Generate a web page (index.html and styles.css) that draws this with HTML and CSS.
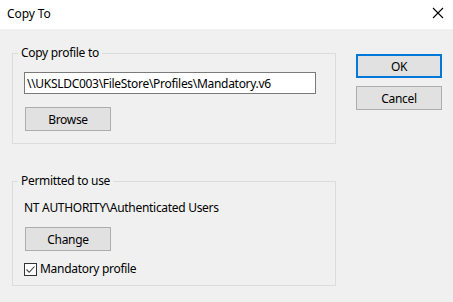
FILE: index.html
```html
<!DOCTYPE html>
<html>
<head>
<meta charset="utf-8">
<link rel="stylesheet" href="styles.css">
</head>
<body>
<div class="window">
  <div class="titlebar">
    <span class="title">Copy To</span>
    <svg class="close" width="12" height="12" viewBox="0 0 12 12"><path d="M1 1L11 11M11 1L1 11" stroke="#000" stroke-width="1.1" fill="none"/></svg>
  </div>
  <div class="content">
    <div class="main">
      <fieldset class="group g1">
        <legend>Copy profile to</legend>
        <input class="path" type="text" value="\\UKSLDC003\FileStore\Profiles\Mandatory.v6">
        <button class="btn browse">Browse</button>
      </fieldset>
      <fieldset class="group g2">
        <legend>Permitted to use</legend>
        <div class="who">NT AUTHORITY\Authenticated Users</div>
        <button class="btn change">Change</button>
        <label class="check">
          <span class="box"><svg width="11" height="11" viewBox="0 0 11 11"><path d="M1.5 5.5L4.2 8.3L9.5 2.5" stroke="#3a3a3a" stroke-width="1.1" fill="none"/></svg></span>
          <span>Mandatory profile</span>
        </label>
      </fieldset>
    </div>
    <div class="side">
      <button class="btn ok">OK</button>
      <button class="btn">Cancel</button>
    </div>
  </div>
</div>
</body>
</html>
```
FILE: styles.css
```css
html, body {
  margin: 0;
  padding: 0;
}
body {
  width: 453px;
  height: 302px;
  overflow: hidden;
  background: #f0f0f0;
  font-family: "Noto Sans", "Liberation Sans", sans-serif;
  font-size: 12px;
  letter-spacing: -0.3px;
  color: #000;
}
.window {
  width: 453px;
  height: 302px;
  display: flex;
  flex-direction: column;
}
.titlebar {
  height: 29px;
  background: #fff;
  display: flex;
  align-items: center;
  justify-content: space-between;
  padding: 0 8px 0 7px;
  box-sizing: border-box;
}
.title {
  font-size: 12px;
  line-height: 16px;
  margin-top: -1px;
  letter-spacing: -0.1px;
}
.close {
  display: block;
  margin-right: 1px;
  margin-top: -3px;
}
.content {
  display: flex;
  padding: 16px 0 0 12px;
  gap: 20px;
}
.main {
  width: 324px;
  display: flex;
  flex-direction: column;
}
.group {
  margin: 0;
  border: 1px solid #dcdcdc;
  padding: 11px 0 12px 11px;
  min-width: 0;
  box-sizing: border-box;
  width: 324px;
}
.group legend {
  margin-left: -6px;
  padding: 0 3px;
  line-height: 16px;
}
.g2 {
  margin-top: 29px;
  padding-bottom: 8px;
}
.path {
  display: block;
  width: 292px;
  height: 22px;
  box-sizing: border-box;
  border: 1px solid #7a7a7a;
  background: #fff;
  padding: 0 0 0 2px;
  margin: 0;
  font-family: inherit;
  font-size: 12px;
  letter-spacing: -0.3px;
  color: #000;
  outline: none;
}
.btn {
  display: block;
  width: 86px;
  height: 24px;
  box-sizing: border-box;
  background: #e1e1e1;
  border: 1px solid #adadad;
  font-family: inherit;
  font-size: 12px;
  letter-spacing: -0.3px;
  color: #000;
  padding: 0;
  margin: 0;
}
.browse {
  margin: 13px 0 0 1px;
}
.who {
  line-height: 16px;
}
.change {
  margin: 11px 0 0 1px;
}
.check {
  display: flex;
  align-items: center;
  gap: 3px;
  height: 16px;
  margin-top: 10px;
  line-height: 16px;
}
.box {
  width: 13px;
  height: 13px;
  box-sizing: border-box;
  border: 1px solid #333;
  background: #fff;
  display: flex;
  align-items: center;
  justify-content: center;
}
.box svg {
  display: block;
}
.side {
  display: flex;
  flex-direction: column;
  gap: 8px;
  padding-top: 9px;
}
.ok {
  border: 2px solid #0078d7;
}
```
